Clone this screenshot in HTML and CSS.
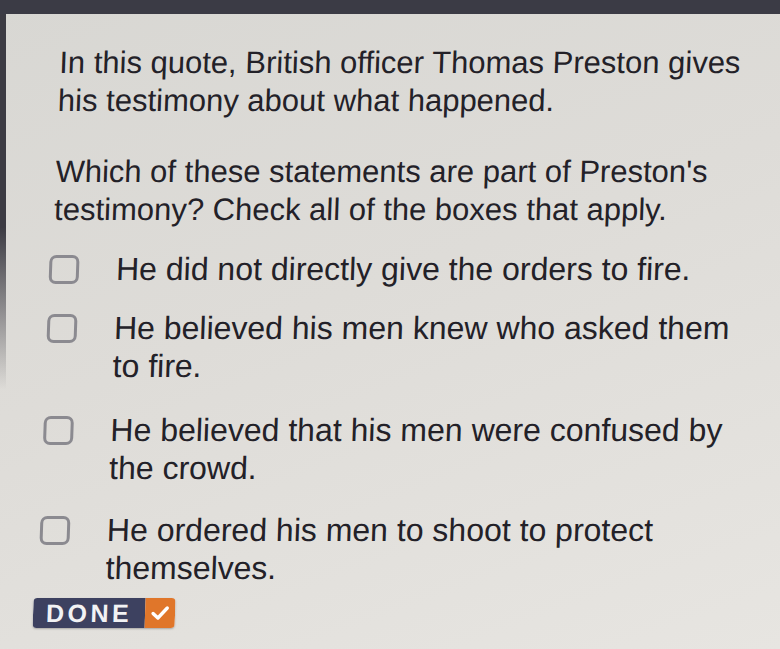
FILE: index.html
```html
<!DOCTYPE html>
<html lang="en">
<head>
    <meta charset="UTF-8">
    <meta name="viewport" content="width=device-width, initial-scale=1.0">
    <title>Boston Massacre - Question</title>
    <link rel="stylesheet" href="styles.css">
</head>
<body>
    <div class="topbar"></div>
    <div class="card">
        <p class="prompt">In this quote, British officer Thomas Preston gives his testimony about what happened.</p>
        <p class="prompt question">Which of these statements are part of Preston's testimony? Check all of the boxes that apply.</p>
        <ul class="choices">
            <li class="choice">
                <span class="box"></span>
                <span class="label">He did not directly give the orders to fire.</span>
            </li>
            <li class="choice">
                <span class="box"></span>
                <span class="label">He believed his men knew who asked them to fire.</span>
            </li>
            <li class="choice">
                <span class="box"></span>
                <span class="label">He believed that his men were confused by the crowd.</span>
            </li>
            <li class="choice">
                <span class="box"></span>
                <span class="label">He ordered his men to shoot to protect themselves.</span>
            </li>
        </ul>
        <button class="done">
            <span class="done-text">DONE</span>
            <span class="done-check">
                <svg width="18" height="16" viewBox="0 0 18 16">
                    <path d="M2 8.5 L7 13 L16 3" fill="none" stroke="#fff" stroke-width="3.4" stroke-linecap="round" stroke-linejoin="round"/>
                </svg>
            </span>
        </button>
    </div>
</body>
</html>
```

FILE: styles.css
```css
body {
    margin: 0;
    min-height: 100vh;
    background:
        linear-gradient(to bottom, #3c3b43 0, #3c3b43 35%, rgba(60, 59, 67, 0) 60%) left top / 6px 100% no-repeat,
        linear-gradient(160deg, #d8d7d3 0%, #dedcd8 45%, #e7e5e1 100%);
    font-family: 'Liberation Sans', Arial, sans-serif;
    color: #232128;
    overflow: hidden;
}
.topbar {
    height: 14px;
    background-color: #3b3b45;
}
.card {
    padding: 30px 0 0 54px;
    width: 706px;
    transform: skewX(-2deg);
    transform-origin: 0 0;
}
.prompt {
    margin: 0 0 33px 7px;
    font-size: 31px;
    line-height: 38px;
}
.question {
    margin-bottom: 21px;
}
.choices {
    list-style: none;
    margin: 0;
    padding: 0 0 0 4px;
}
.choice {
    display: flex;
    align-items: flex-start;
    gap: 37px;
    margin-bottom: 21px;
    font-size: 32px;
    line-height: 38px;
}
.choice:nth-child(2) {
    margin-bottom: 26px;
}
.choice:nth-child(3) {
    margin-bottom: 24px;
}
.choice:last-child {
    margin-bottom: 11px;
}
.box {
    flex: none;
    width: 30px;
    height: 29px;
    margin-top: 5px;
    border: 3px solid #8b8a90;
    border-radius: 7px;
    box-sizing: border-box;
}
.label {
    flex: 1;
}
.done {
    display: flex;
    padding: 0;
    border: none;
    border-radius: 4px;
    overflow: hidden;
    height: 30px;
    box-shadow: 0 1px 2px rgba(0, 0, 0, 0.25);
    cursor: pointer;
}
.done-text {
    width: 112px;
    background-color: #3d4160;
    color: #f2f2f4;
    font-family: 'Liberation Sans', Arial, sans-serif;
    font-weight: bold;
    font-size: 25px;
    line-height: 30px;
    letter-spacing: 3.5px;
    text-align: center;
}
.done-check {
    width: 30px;
    background-color: #e0762a;
    display: flex;
    align-items: center;
    justify-content: center;
}
```
